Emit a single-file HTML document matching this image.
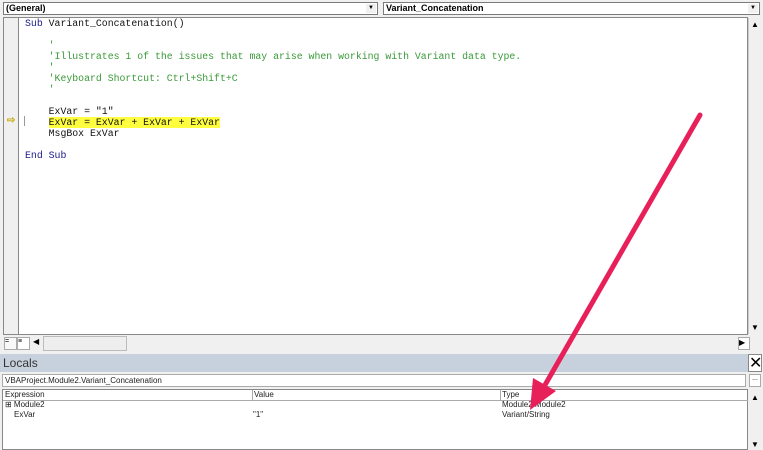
<!DOCTYPE html>
<html><head><style>
body{margin:0;width:763px;height:450px;background:#f0f0f0;position:relative;overflow:hidden;font-family:"Liberation Sans",sans-serif}
.a{position:absolute}
.dd{background:#fff;border:1px solid #7a7a7a;height:13px;font:bold 9px "Liberation Sans",sans-serif;line-height:11px;padding-left:2px;box-sizing:border-box}
.btn{position:absolute;right:1px;top:1px;width:10px;height:9px;background:#f0f0f0;font-size:6px;text-align:center;line-height:9px}
.code{font:9.85px "Liberation Mono",monospace;white-space:pre;line-height:11px}
.g{color:#3a9a3a}.b{color:#1a1a8a}
.sm{font-size:8px;color:#222;line-height:10px}
</style></head><body>
<div class="a dd" style="left:3px;top:2px;width:375px;">(General)<div class="btn">▼</div></div>
<div class="a dd" style="left:383px;top:2px;width:377px;">Variant_Concatenation<div class="btn">▼</div></div>
<div class="a" style="left:3px;top:17px;width:745px;height:318px;background:#fff;border:1px solid #888;box-sizing:border-box"></div>
<div class="a" style="left:4px;top:18px;width:14px;height:316px;background:#f0f0f0;border-right:1px solid #888"></div>
<div class="a" style="left:748px;top:18px;width:14px;height:316px;background:#f0f0f0;border-left:1px solid #ccc"></div>
<div class="a" style="left:751px;top:20px;font-size:8px">▲</div>
<div class="a" style="left:751px;top:323px;font-size:8px">▼</div>
<div class="a code" style="left:25px;top:18px;color:#111"><span class="b">Sub</span> Variant_Concatenation()

    <span class="g">'</span>
    <span class="g">'Illustrates 1 of the issues that may arise when working with Variant data type.</span>
    <span class="g">'</span>
    <span class="g">'Keyboard Shortcut: Ctrl+Shift+C</span>
    <span class="g">'</span>

    ExVar = "1"
    <span style="background:#ffff40">ExVar = ExVar + ExVar + ExVar</span>
    MsgBox ExVar

<span class="b">End Sub</span></div>
<div class="a" style="left:7px;top:115px;color:#c8a800;font-size:10px;font-weight:bold">⇨</div>
<div class="a" style="left:24px;top:116px;width:1px;height:10px;background:#999"></div>
<div class="a" style="left:3px;top:335px;width:745px;height:14px;background:#f0f0f0"></div>
<div class="a" style="left:4px;top:337px;width:11px;height:11px;font-size:7px;border:1px solid #aaa;background:#f8f8f8">=</div>
<div class="a" style="left:17px;top:337px;width:11px;height:11px;font-size:7px;border:1px solid #aaa;background:#fff">≡</div>
<div class="a" style="left:33px;top:337px;font-size:8px">◀</div>
<div class="a" style="left:43px;top:336px;width:82px;height:13px;border:1px solid #bbb;background:#eee"></div>
<div class="a" style="left:738px;top:337px;font-size:8px;border:1px solid #aaa;background:#fff;width:10px;height:11px">▶</div>
<div class="a" style="left:0;top:354px;width:747px;height:18px;background:#c7d1dd;font-size:12px;line-height:18px;padding-left:3px;color:#333">Locals</div>
<div class="a" style="left:748px;top:354px;width:14px;height:18px;background:#fff;font-size:16px;line-height:18px;text-align:center;border:1px solid #888;box-sizing:border-box">✕</div>
<div class="a" style="left:2px;top:374px;width:744px;height:13px;background:#fff;border:1px solid #aaa;box-sizing:border-box"><div class="sm" style="padding-left:2px;line-height:11px">VBAProject.Module2.Variant_Concatenation</div></div>
<div class="a" style="left:749px;top:374px;width:12px;height:13px;background:#fff;border:1px solid #aaa;box-sizing:border-box;font-size:7px;text-align:center">...</div>
<div class="a" style="left:2px;top:389px;width:746px;height:61px;background:#fff;border:1px solid #888;box-sizing:border-box"></div>
<div class="a" style="left:3px;top:390px;width:745px;height:10px;border-bottom:1px solid #aaa"></div>
<div class="a" style="left:252px;top:390px;height:10px;border-left:1px solid #aaa"></div>
<div class="a" style="left:500px;top:390px;height:10px;border-left:1px solid #aaa"></div>
<div class="a sm" style="left:5px;top:390px">Expression</div>
<div class="a sm" style="left:254px;top:390px">Value</div>
<div class="a sm" style="left:502px;top:390px">Type</div>
<div class="a sm" style="left:5px;top:400px">⊞ Module2</div>
<div class="a sm" style="left:14px;top:410px">ExVar</div>
<div class="a sm" style="left:253px;top:410px">"1"</div>
<div class="a sm" style="left:502px;top:400px">Module2/Module2</div>
<div class="a sm" style="left:502px;top:410px">Variant/String</div>
<div class="a" style="left:748px;top:389px;width:14px;height:61px;background:#f0f0f0"></div>
<div class="a" style="left:751px;top:393px;font-size:8px">▲</div>
<div class="a" style="left:751px;top:440px;font-size:8px">▼</div>
<svg class="a" style="left:0;top:0" width="763" height="450"><line x1="700" y1="115" x2="545" y2="385" stroke="#e8205a" stroke-width="5" stroke-linecap="round"/><polygon points="530,410 533,378 556,391" fill="#e8205a"/></svg>
</body></html>
